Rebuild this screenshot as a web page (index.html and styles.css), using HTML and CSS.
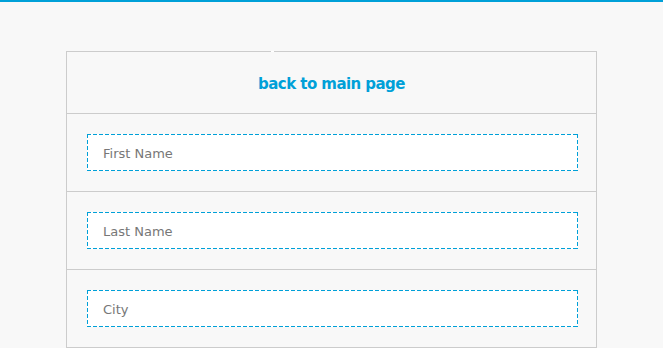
FILE: index.html
```html
<!DOCTYPE html>
<html>
<head>
<meta charset="utf-8">
<link rel="stylesheet" href="styles.css">
</head>
<body>
<div class="topbar"></div>
<div class="panel">
  <span class="notch"></span>
  <div class="head"><a class="back" href="#">back to main page</a></div>
  <div class="row"><div class="field">First Name</div></div>
  <div class="row"><div class="field">Last Name</div></div>
  <div class="row"><div class="field">City</div></div>
</div>
</body>
</html>
```

FILE: styles.css
```css
html, body {
  margin: 0;
  padding: 0;
  background: #f8f8f8;
  font-family: "DejaVu Sans", Verdana, sans-serif;
}
.topbar {
  height: 2px;
  background: #00a0d8;
}
.panel {
  position: relative;
  width: 529px;
  margin: 49px auto 0;
  border: 1px solid #cccccc;
  background: #f8f8f8;
}
.notch {
  position: absolute;
  top: -1px;
  left: 204px;
  width: 3px;
  height: 1px;
  background: #ffffff;
}
.head {
  height: 61px;
  display: flex;
  align-items: center;
  justify-content: center;
  border-bottom: 1px solid #cccccc;
}
.back {
  color: #00a0d8;
  font-weight: bold;
  font-size: 15px;
  text-decoration: none;
  letter-spacing: -0.55px;
  padding-top: 2px;
}
.row {
  padding: 20px 18px 20px 20px;
  border-bottom: 1px solid #cccccc;
}
.row:last-child {
  border-bottom: none;
}
.field {
  box-sizing: border-box;
  height: 37px;
  padding: 2px 0 0 16px;
  display: flex;
  align-items: center;
  font-size: 13px;
  color: #777777;
  background:
    repeating-linear-gradient(90deg, #00a0d8 0 4px, transparent 4px 6px) top left / 100% 1px no-repeat,
    repeating-linear-gradient(90deg, #00a0d8 0 4px, transparent 4px 6px) bottom left / 100% 1px no-repeat,
    repeating-linear-gradient(180deg, #00a0d8 0 4px, transparent 4px 6px) top left / 1px 100% no-repeat,
    repeating-linear-gradient(180deg, #00a0d8 0 4px, transparent 4px 6px) top right / 1px 100% no-repeat,
    #ffffff;
}
```
